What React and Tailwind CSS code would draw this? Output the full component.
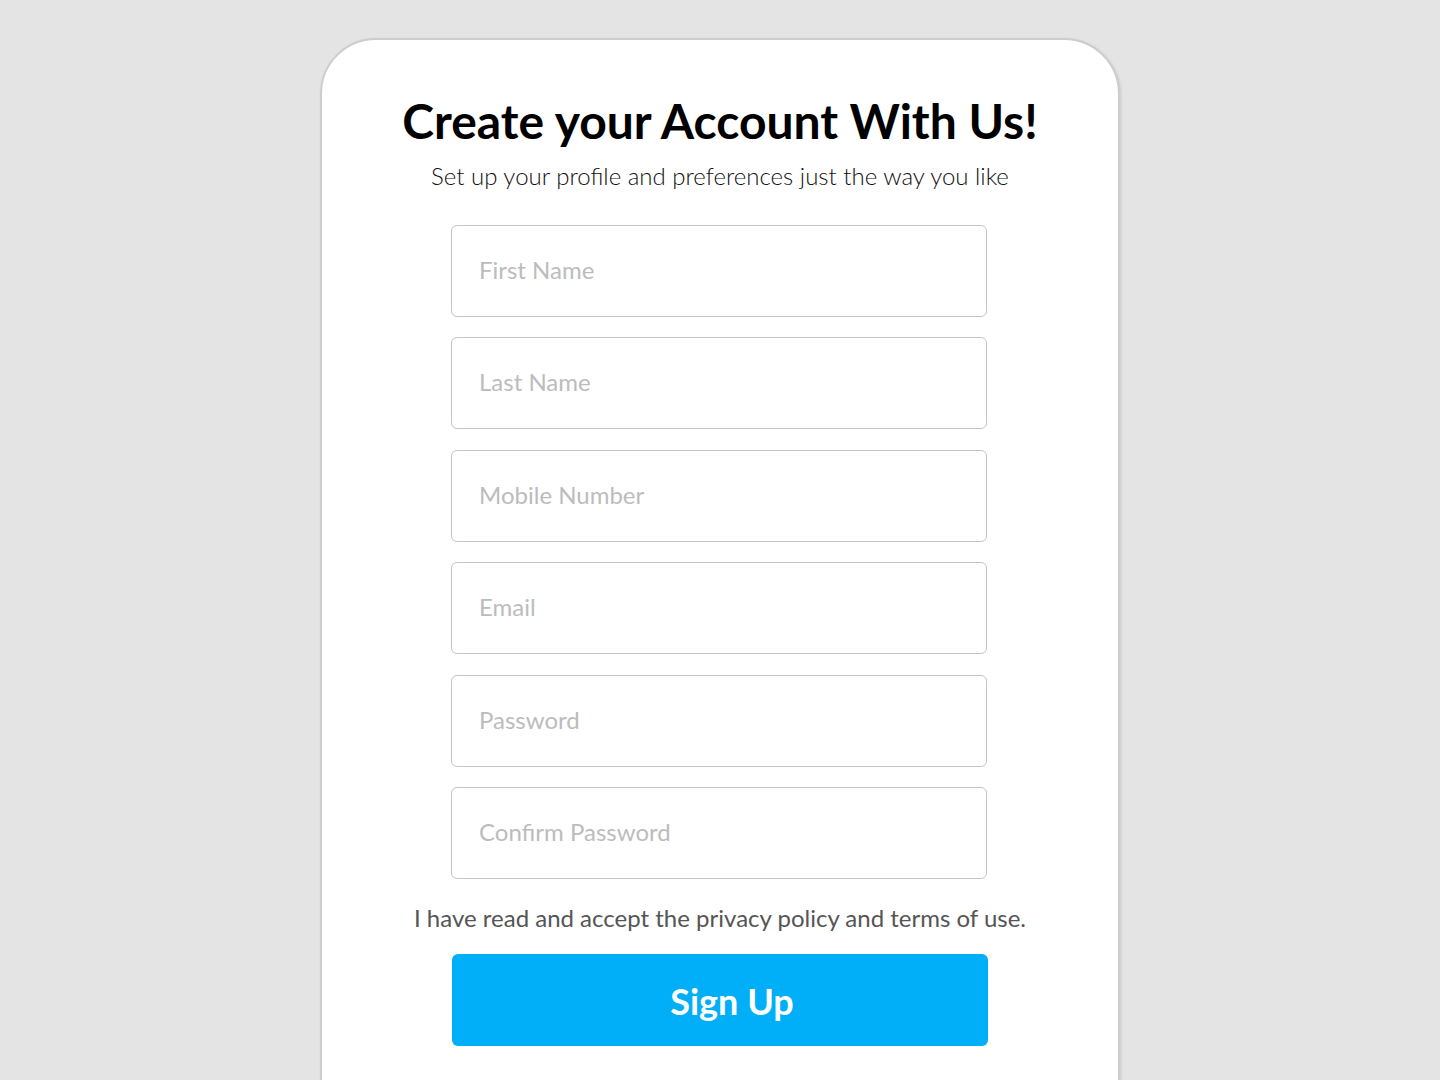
export default function App() {
  const fields = ["First Name", "Last Name", "Mobile Number", "Email", "Password", "Confirm Password"];
  return (
    <div className="w-[1440px] h-[1080px] overflow-hidden bg-[#e4e4e4] flex justify-center pt-[38px]" style={{ fontFamily: "Lato, 'Noto Sans', sans-serif" }}>
      <div className="w-[800px] h-[1100px] bg-white rounded-t-[56px] border-2 border-[#cdcdcd] shadow-[1px_1px_3px_rgba(0,0,0,0.12)] flex flex-col items-center pt-[49px]">
        <h1 className="text-[48px] leading-[64px] font-bold text-black">Create your Account With Us!</h1>
        <p className="mt-[8px] text-[24px] leading-[30px] font-light text-[#111]">Set up your profile and preferences just the way you like</p>
        <div className="mt-[34px] flex flex-col gap-[20.4px] w-[536px] ml-[-2px]">
          {fields.map((f) => (
            <input
              key={f}
              placeholder={f}
              className="h-[92px] w-full border border-[#c4c4c4] rounded-[6px] pl-[27px] pr-[28px] pb-[3px] text-[24px] text-[#333] placeholder:text-[#bcbcbc] outline-none bg-white"
              style={{ fontFamily: "Lato, sans-serif" }}
            />
          ))}
        </div>
        <p className="mt-[24px] text-[24px] leading-[30px] text-[#555]">I have read and accept the privacy policy and terms of use.</p>
        <button className="mt-[21px] w-[536px] h-[92px] bg-[#00aff8] rounded-[6px] text-white text-[36px] font-bold pl-[24px] pt-[2px]" style={{ fontFamily: "Lato, sans-serif" }}>Sign Up</button>
      </div>
    </div>
  );
}
